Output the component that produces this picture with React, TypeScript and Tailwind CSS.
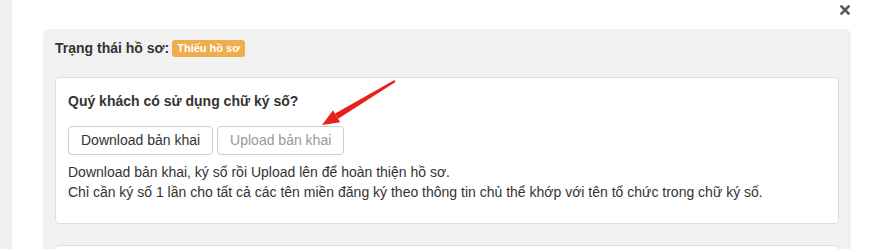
const App = () => {
  return (
    <div className="flex h-[249px] w-[869px] overflow-hidden bg-white font-['Liberation_Sans',Arial,sans-serif] text-[14px] text-[#333]">
      <div className="w-[12px] shrink-0 bg-[#f0f0f0]" />
      <div className="relative flex-1">
        <button className="absolute right-[19px] top-[4px] text-[15px] font-bold leading-none text-[#555]">
          <svg width="10" height="10" viewBox="0 0 10 10" className="mt-[1px]">
            <path d="M1.5 1.5 L8.5 8.5 M8.5 1.5 L1.5 8.5" stroke="#5a5a5a" strokeWidth="2.6" strokeLinecap="square" />
          </svg>
        </button>

        <div className="ml-[31px] mr-[18px] mt-[29px] rounded-[6px] bg-[#f1f1f1] px-[12px] pb-[20px] pt-[10px]">
          <div className="flex h-[18px] items-center gap-[3px]">
            <span className="text-[14px] font-bold">Trạng thái hồ sơ:</span>
            <span className="rounded-[3px] bg-[#f0ad4e] px-[5px] py-[2px] text-[11px] font-bold leading-[13px] text-white">
              Thiếu hồ sơ
            </span>
          </div>

          <div className="mt-[20px] rounded-[4px] border border-[#ddd] bg-white px-[12px] pb-[21px] pt-[13px]">
            <p className="text-[14px] font-bold leading-[20px]">Quý khách có sử dụng chữ ký số?</p>
            <div className="mt-[15px] flex gap-[4px]">
              <button className="h-[29px] rounded-[4px] border border-[#ccc] bg-white px-[12px] text-[14px] text-[#333]">
                Download bản khai
              </button>
              <button className="h-[29px] rounded-[4px] border border-[#ccc] bg-white px-[12px] text-[14px] text-[#999]">
                Upload bản khai
              </button>
            </div>
            <div className="mt-[7px] leading-[20px]">
              <p>Download bản khai, ký số rồi Upload lên để hoàn thiện hồ sơ.</p>
              <p>Chỉ cần ký số 1 lần cho tất cả các tên miền đăng ký theo thông tin chủ thể khớp với tên tổ chức trong chữ ký số.</p>
            </div>
          </div>

          <div className="mt-[21px] h-[40px] rounded-[4px] border border-[#ddd] bg-white" />
        </div>

        {/* red arrow pointing at the upload button */}
        <svg className="pointer-events-none absolute left-[286px] top-[76px]" width="110" height="56" viewBox="0 0 110 56">
          <polygon points="96.5,4.1 97.5,5.9 40.15,42.8 37.05,37.6" fill="#e8201c" />
          <polygon points="24,49 35,34.2 42.2,46.2" fill="#e8201c" />
        </svg>
      </div>
    </div>
  );
};

export default App;
